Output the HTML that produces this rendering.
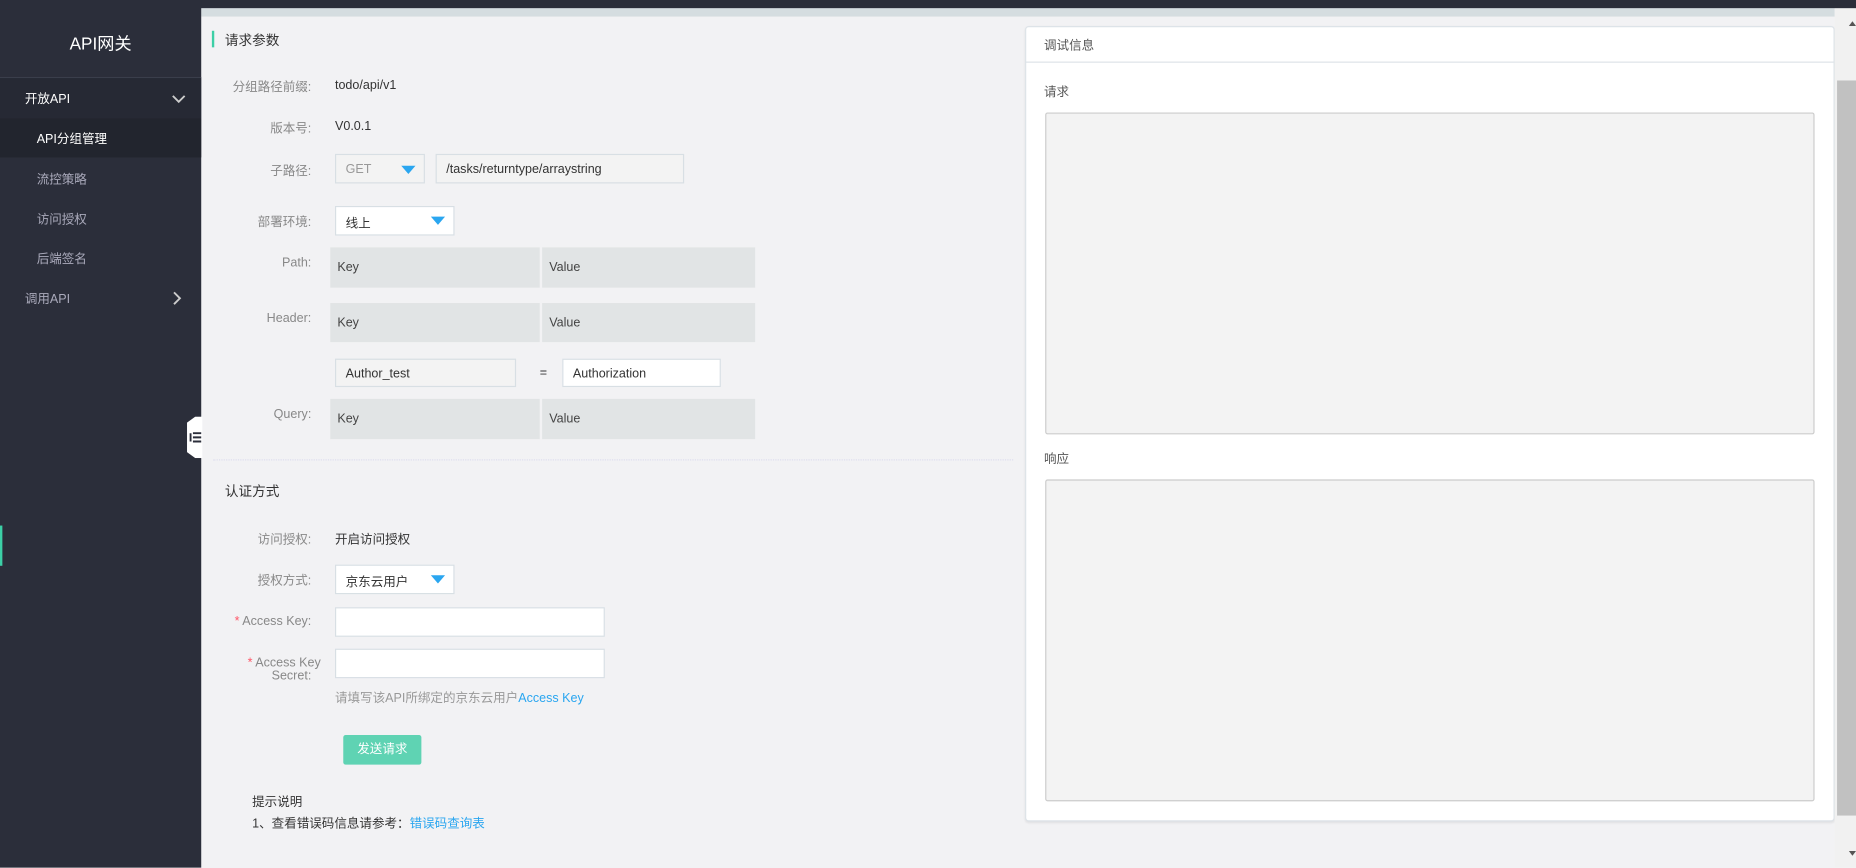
<!DOCTYPE html>
<html><head><meta charset="utf-8"><style>
*{box-sizing:border-box;margin:0;padding:0}
html,body{width:1856px;height:868px;overflow:hidden;background:#f2f2f4}
#w{position:absolute;left:0;top:0;width:1568px;height:733px;transform:scale(1.18367);transform-origin:0 0;font-family:"Liberation Sans","Noto Sans CJK SC",sans-serif;font-size:10.6px;color:#333;background:#f2f2f4}
.a{position:absolute}
.lab{position:absolute;right:1305px;color:#888;white-space:nowrap;text-align:right}
.val{position:absolute;left:283px;white-space:nowrap}
.box{position:absolute;border:1px solid #d8dfe4;background:#fff}
.cell{position:absolute;background:#e1e4e5;padding-left:6px;color:#444}
.tri{position:absolute;width:0;height:0;border-left:6px solid transparent;border-right:6px solid transparent;border-top:7px solid #2aa6f0}
.side{color:#aab;position:absolute;left:31px}
</style></head><body><div id="w">
<div class="a" style="left:0;top:0;width:1568px;height:7px;background:#2b2e3a"></div>
<div class="a" style="left:170px;top:7px;width:1380px;height:7px;background:#d5dde0"></div>
<div class="a" style="left:0;top:0;width:170px;height:733px;background:#2b2e3a"></div>
<div class="a" style="left:0;top:26px;width:170px;text-align:center;color:#fff;font-size:14.5px">API网关</div>
<div class="a" style="left:0;top:65px;width:170px;height:1px;background:#3a3e4b"></div>
<div class="a" style="left:0;top:66px;width:170px;height:34px;background:#262934"></div>
<div class="a" style="left:21px;top:76px;color:#fff">开放API</div>
<svg class="a" style="left:145px;top:79px" width="12" height="10"><path d="M1 2 L6 7 L11 2" stroke="#ccc" stroke-width="1.6" fill="none"/></svg>
<div class="a" style="left:0;top:100px;width:170px;height:33px;background:#22252e"></div>
<div class="a" style="left:31px;top:110px;color:#fff">API分组管理</div>
<div class="side" style="top:144px">流控策略</div>
<div class="side" style="top:178px">访问授权</div>
<div class="side" style="top:211px">后端签名</div>
<div class="a" style="left:21px;top:245px;color:#aab">调用API</div>
<svg class="a" style="left:145px;top:246px" width="10" height="12"><path d="M2 1 L7 6 L2 11" stroke="#ccc" stroke-width="1.6" fill="none"/></svg>
<div class="a" style="left:0;top:444px;width:2px;height:34px;background:#3ccfa6"></div>
<svg class="a" style="left:157px;top:352px" width="14" height="35"><path d="M14 0 L14 35 L8 35 L1 30 L1 5 L8 0Z" fill="#fff"/><path d="M6 14h7M6 17.5h7M6 21h7M4 14v7" stroke="#2b2e3a" stroke-width="1.6"/></svg>
<div class="a" style="left:179px;top:26px;width:2px;height:14px;background:#3ccfa6"></div>
<div class="a" style="left:190px;top:26px;font-size:11.5px">请求参数</div>
<div class="lab" style="top:66px">分组路径前缀:</div><div class="val" style="top:66px">todo/api/v1</div>
<div class="lab" style="top:101px">版本号:</div><div class="val" style="top:101px">V0.0.1</div>
<div class="lab" style="top:137px">子路径:</div>
<div class="box" style="left:283px;top:130px;width:76px;height:25px;background:#f3f3f3;padding:6px 8px;color:#999">GET</div><div class="tri" style="left:339px;top:140px"></div>
<div class="box" style="left:368px;top:130px;width:210px;height:25px;background:#f3f3f3;padding:6px 8px">/tasks/returntype/arraystring</div>
<div class="lab" style="top:180px">部署环境:</div>
<div class="box" style="left:283px;top:174px;width:101px;height:25px;padding:6px 8px">线上</div><div class="tri" style="left:364px;top:183px"></div>
<div class="lab" style="top:216px">Path:</div>
<div class="cell" style="left:279px;top:209px;width:177px;height:34px;padding-top:11px">Key</div><div class="cell" style="left:458px;top:209px;width:180px;height:34px;padding-top:11px">Value</div>
<div class="lab" style="top:263px">Header:</div>
<div class="cell" style="left:279px;top:256px;width:177px;height:33px;padding-top:11px">Key</div><div class="cell" style="left:458px;top:256px;width:180px;height:33px;padding-top:11px">Value</div>
<div class="box" style="left:283px;top:303px;width:153px;height:24px;background:#f3f3f3;padding:6px 8px">Author_test</div>
<div class="a" style="left:456px;top:309px">=</div>
<div class="box" style="left:475px;top:303px;width:134px;height:24px;padding:6px 8px">Authorization</div>
<div class="lab" style="top:344px">Query:</div>
<div class="cell" style="left:279px;top:337px;width:177px;height:34px;padding-top:11px">Key</div><div class="cell" style="left:458px;top:337px;width:180px;height:34px;padding-top:11px">Value</div>
<div class="a" style="left:180px;top:388px;width:676px;border-top:1px dotted #dde"></div>
<div class="a" style="left:190px;top:407px;font-size:11.5px">认证方式</div>
<div class="lab" style="top:448px">访问授权:</div><div class="val" style="top:448px">开启访问授权</div>
<div class="lab" style="top:483px">授权方式:</div>
<div class="box" style="left:283px;top:477px;width:101px;height:25px;padding:6px 8px">京东云用户</div><div class="tri" style="left:364px;top:486px"></div>
<div class="lab" style="top:519px"><span style="color:#f56">*</span> Access Key:</div>
<div class="box" style="left:283px;top:513px;width:228px;height:25px"></div>
<div class="lab" style="top:555px;right:1297px;line-height:11px"><span style="color:#f56">*</span> Access Key<br><span style="margin-right:8px">Secret:</span></div>
<div class="box" style="left:283px;top:548px;width:228px;height:25px"></div>
<div class="a" style="left:283px;top:582px;color:#999">请填写该API所绑定的京东云用户<span style="color:#2aa6f0">Access Key</span></div>
<div class="a" style="left:290px;top:621px;width:66px;height:25px;background:#5fd3b3;border-radius:2px;color:#fff;text-align:center;line-height:25px">发送请求</div>
<div class="a" style="left:213px;top:670px">提示说明</div>
<div class="a" style="left:213px;top:688px">1、查看错误码信息请参考：<span style="color:#2aa6f0">错误码查询表</span></div>
<div class="a" style="left:866px;top:22px;width:684px;height:672px;background:#fff;border:1px solid #dde3e8;border-radius:3px;box-shadow:0 1px 2px rgba(0,0,0,.08)"></div>
<div class="a" style="left:866px;top:52px;width:684px;height:1px;background:#dde3e8"></div>
<div class="a" style="left:882px;top:31px;color:#555">调试信息</div>
<div class="a" style="left:882px;top:70px;color:#555">请求</div>
<div class="a" style="left:883px;top:95px;width:650px;height:272px;background:#f3f3f3;border:1px solid #ccc;border-radius:2px"></div>
<div class="a" style="left:882px;top:380px;color:#555">响应</div>
<div class="a" style="left:883px;top:405px;width:650px;height:272px;background:#f3f3f3;border:1px solid #ccc;border-radius:2px"></div>
<div class="a" style="left:1550px;top:7px;width:18px;height:726px;background:#f1f1f1"></div>
<div class="a" style="left:1552px;top:68px;width:16px;height:621px;background:#c1c1c1"></div>
<div class="a" style="left:1562px;top:18px;width:0;height:0;border-left:3px solid transparent;border-right:3px solid transparent;border-bottom:4px solid #555"></div>
<div class="a" style="left:1562px;top:719px;width:0;height:0;border-left:3px solid transparent;border-right:3px solid transparent;border-top:4px solid #555"></div>
</div></body></html>
